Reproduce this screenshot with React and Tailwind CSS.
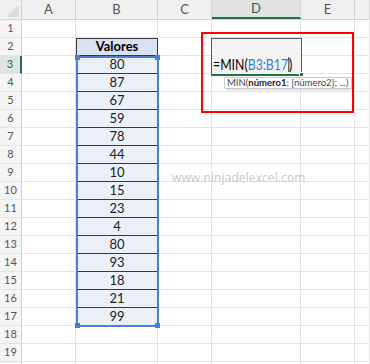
import React from 'react'

const COLS = [
  { key: 'A', w: 'w-[54px]' },
  { key: 'B', w: 'w-[82px]' },
  { key: 'C', w: 'w-[54px]' },
  { key: 'D', w: 'w-[89px]' },
  { key: 'E', w: 'w-[54px]' },
  { key: '', w: 'flex-1' },
]

const valores = [80, 87, 67, 59, 78, 44, 10, 15, 23, 4, 80, 93, 18, 21, 99]

function Celda({ col, fila }) {
  if (col.key === 'B' && fila === 2) {
    return (
      <div className={`${col.w} h-full bg-[#d9e1f2] border border-[#3a3a3a] flex items-center justify-center font-bold text-[13px] text-black`}>
        Valores
      </div>
    )
  }
  if (col.key === 'B' && fila >= 3 && fila <= 17) {
    return (
      <div className={`${col.w} h-full bg-[#eaeff8] border-x border-b border-[#3a3a3a] flex items-center justify-center text-[13px] text-[#222]`}>
        {valores[fila - 3]}
      </div>
    )
  }
  return <div className={`${col.w} h-full border-r border-b border-[#e3e3e3]`} />
}

export default function App() {
  const filas = Array.from({ length: 20 }, (_, i) => i + 1)

  return (
    <div className="relative w-[370px] h-[364px] overflow-hidden bg-white font-['Lato',sans-serif]">
      {/* Encabezado de columnas */}
      <div className="flex h-[20px] bg-[#f0f0f0] border-b border-[#d4d4d4]">
        <div className="relative w-[22px] h-full border-r border-[#d4d4d4]">
          <svg className="absolute right-[2px] bottom-[2px]" width="13" height="12" viewBox="0 0 13 12">
            <polygon points="13,0 13,12 0,12" fill="#dcdcdc" />
          </svg>
        </div>
        {COLS.map((c) =>
          c.key === 'D' ? (
            <div key={c.key} className={`${c.w} h-full bg-[#e2e2e2] border-r border-[#d4d4d4] border-b-2 border-b-[#217346] flex items-center justify-center text-[13px] text-[#1e6b41]`}>
              {c.key}
            </div>
          ) : (
            <div key={c.key} className={`${c.w} h-full border-r border-[#d4d4d4] flex items-center justify-center text-[13px] text-[#555]`}>
              {c.key}
            </div>
          )
        )}
      </div>

      {/* Filas */}
      {filas.map((f) => (
        <div key={f} className="flex h-[18px]">
          {f === 3 ? (
            <div className="w-[22px] h-full bg-[#e2e2e2] border-r-2 border-[#217346] border-b border-b-[#e3e3e3] flex items-center justify-center text-[11px] text-[#1e6b41]">
              {f}
            </div>
          ) : (
            <div className="w-[22px] h-full bg-[#f5f5f5] border-r border-[#d4d4d4] border-b border-b-[#e3e3e3] flex items-center justify-center text-[11px] text-[#555]">
              {f < 20 ? f : ''}
            </div>
          )}
          {COLS.map((c) => (
            <Celda key={c.key} col={c} fila={f} />
          ))}
        </div>
      ))}

      {/* Selección B3:B17 */}
      <div className="absolute left-[76px] top-[56px] w-[83px] h-[271px] border-2 border-[#4a7fd6] pointer-events-none">
        <div className="absolute -left-[3px] -top-[3px] w-[5px] h-[5px] bg-[#4a7fd6]" />
        <div className="absolute -right-[3px] -top-[3px] w-[5px] h-[5px] bg-[#4a7fd6]" />
        <div className="absolute -left-[3px] -bottom-[3px] w-[5px] h-[5px] bg-[#4a7fd6]" />
        <div className="absolute -right-[3px] -bottom-[3px] w-[5px] h-[5px] bg-[#4a7fd6]" />
      </div>

      {/* Marca de agua */}
      <div className="absolute left-[172px] top-[169px] text-[12px] text-[#c9c9c9] font-['Open_Sans',sans-serif] tracking-[0.1px]">
        www.ninjadelexcel.com
      </div>

      {/* Celda en edición */}
      <div className="absolute left-[211px] top-[38px] w-[91px] h-[38px] bg-[#f3f3f3] border border-[#5a5a5a] border-b-2 border-b-[#217346] flex items-end pl-[1px] pb-[1px]">
        <span className="whitespace-nowrap text-[15px] leading-[18px] text-black origin-left scale-x-[0.82]">
          =MIN(<span className="text-[#3a7bd5]">B3:B17</span>
          <span className="inline-block w-px h-[15px] bg-black align-[-2px]" />)
        </span>
        <div className="absolute -right-[3px] -bottom-[3px] w-[5px] h-[5px] bg-[#217346] border border-white" />
      </div>

      {/* Ayuda de la función */}
      <div className="absolute left-[224px] top-[77px] h-[12px] px-[2px] bg-white border border-[#c8c8c8] rounded-[2px] shadow-[1px_1px_2px_rgba(0,0,0,0.15)] flex items-center text-[9.5px] leading-none text-[#444] whitespace-nowrap">
        MIN(<span className="font-bold text-[#222]">número1</span>; [número2]; ...)
      </div>

      {/* Recuadro rojo */}
      <div className="absolute left-[201px] top-[32px] w-[153px] h-[81px] border-2 border-[#ff0000] pointer-events-none" />
    </div>
  )
}
